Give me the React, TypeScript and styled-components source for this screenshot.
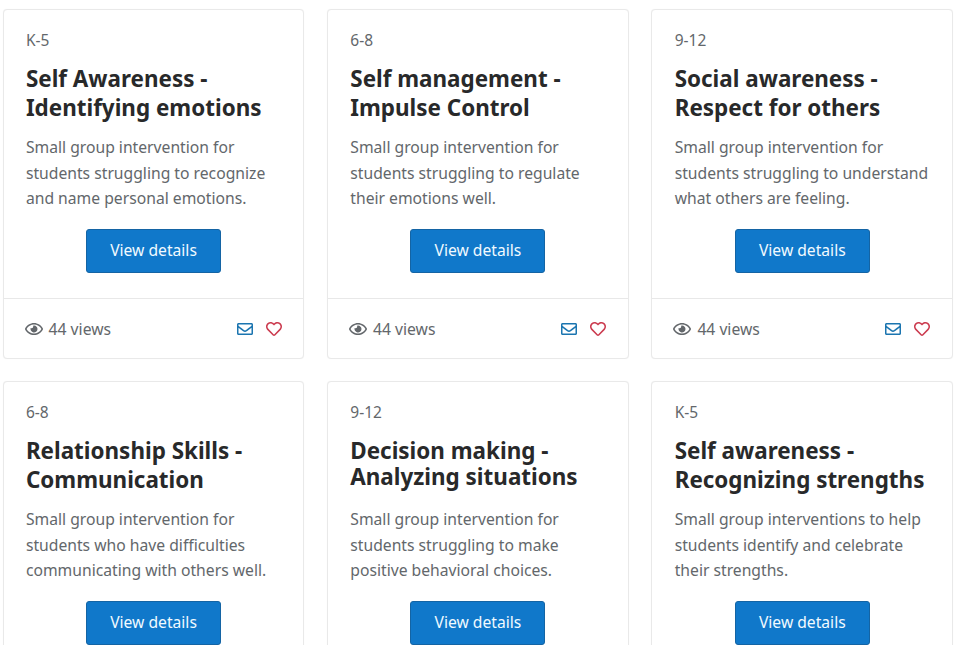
import React from "react";
import styled, { createGlobalStyle } from "styled-components";
import { FaRegEnvelope, FaRegEye, FaRegHeart } from "react-icons/fa";

const GlobalStyle = createGlobalStyle`
  *, *::before, *::after { box-sizing: border-box; }
  body {
    margin: 0;
    background: #fff;
    font-family: "Noto Sans", "Open Sans", sans-serif;
    font-size: 15.7px;
    color: #63676b;
    overflow: hidden;
  }
`;

const Viewport = styled.main`
  height: 645px;
  padding: 9px 1px 0 2.6px;
  overflow: hidden;
`;

const CardGrid = styled.div`
  display: grid;
  grid-template-columns: repeat(3, 301.6px);
  column-gap: 22.8px;
  row-gap: 22px;
`;

const Card = styled.article`
  display: flex;
  flex-direction: column;
  height: 350px;
  border: 1px solid #e9e9e9;
  border-radius: 4px;
  background: #fff;
  box-shadow: 0 0 1px rgba(0, 0, 0, 0.07);
`;

const CardBody = styled.div`
  flex: 1;
  display: flex;
  flex-direction: column;
  align-items: flex-start;
  padding: 17px 22px 0 22.3px;
`;

const Grade = styled.span`
  line-height: 26px;
  font-size: 15.5px;
`;

const Title = styled.h2<{ $tight?: boolean }>`
  height: 58px;
  margin: 11px 0 13px;
  padding-top: ${({ $tight }) => ($tight ? "1.5px" : "0")};
  color: #28292a;
  font-size: 22.43px;
  font-weight: 700;
  line-height: ${({ $tight }) => ($tight ? "26px" : "29px")};
  white-space: pre-line;
`;

const Description = styled.p`
  margin: 0;
  line-height: 25.7px;
  white-space: pre;
`;

const DetailsButton = styled.button`
  align-self: center;
  width: 135px;
  height: 44px;
  margin: 17px 0 0;
  padding: 0;
  border: 1px solid #1464a4;
  border-radius: 3px;
  background: #1078ca;
  color: #f1faff;
  font: 15.65px/1 "Noto Sans", sans-serif;
`;

const CardFooter = styled.footer`
  display: flex;
  align-items: center;
  justify-content: space-between;
  height: 60px;
  padding: 1px 21.6px 0 21px;
  border-top: 1px solid #e8e8e8;
`;

const Views = styled.span`
  display: flex;
  align-items: center;
  gap: 6px;
  line-height: 24px;
`;

const Actions = styled.span`
  display: flex;
  align-items: center;
  gap: 13px;
`;

const MailIcon = styled(FaRegEnvelope)`
  color: #1b75b0;
`;

const HeartIcon = styled(FaRegHeart)`
  color: #cb3a4e;
`;

interface Activity {
  grade: string;
  title: string;
  description: string;
  views?: number;
  tight?: boolean;
}

const activities: Activity[] = [
  {
    grade: "K-5",
    title: "Self Awareness -\nIdentifying emotions",
    description: "Small group intervention for\nstudents struggling to recognize\nand name personal emotions.",
    views: 44,
  },
  {
    grade: "6-8",
    title: "Self management -\nImpulse Control",
    description: "Small group intervention for\nstudents struggling to regulate\ntheir emotions well.",
    views: 44,
  },
  {
    grade: "9-12",
    title: "Social awareness -\nRespect for others",
    description: "Small group intervention for\nstudents struggling to understand\nwhat others are feeling.",
    views: 44,
  },
  {
    grade: "6-8",
    title: "Relationship Skills -\nCommunication",
    description: "Small group intervention for\nstudents who have difficulties\ncommunicating with others well.",
  },
  {
    grade: "9-12",
    title: "Decision making -\nAnalyzing situations",
    description: "Small group intervention for\nstudents struggling to make\npositive behavioral choices.",
    tight: true,
  },
  {
    grade: "K-5",
    title: "Self awareness -\nRecognizing strengths",
    description: "Small group interventions to help\nstudents identify and celebrate\ntheir strengths.",
  },
];

function ActivityCard({ grade, title, description, views, tight }: Activity) {
  return (
    <Card>
      <CardBody>
        <Grade>{grade}</Grade>
        <Title $tight={tight}>{title}</Title>
        <Description>{description}</Description>
        <DetailsButton type="button">View details</DetailsButton>
      </CardBody>
      {views !== undefined && (
        <CardFooter>
          <Views>
            <FaRegEye size={18} />
            {`${views} views`}
          </Views>
          <Actions>
            <MailIcon size={16} />
            <HeartIcon size={16} />
          </Actions>
        </CardFooter>
      )}
    </Card>
  );
}

export default function App() {
  return (
    <>
      <GlobalStyle />
      <Viewport>
        <CardGrid>
          {activities.map((activity) => (
            <ActivityCard key={activity.title} {...activity} />
          ))}
        </CardGrid>
      </Viewport>
    </>
  );
}
